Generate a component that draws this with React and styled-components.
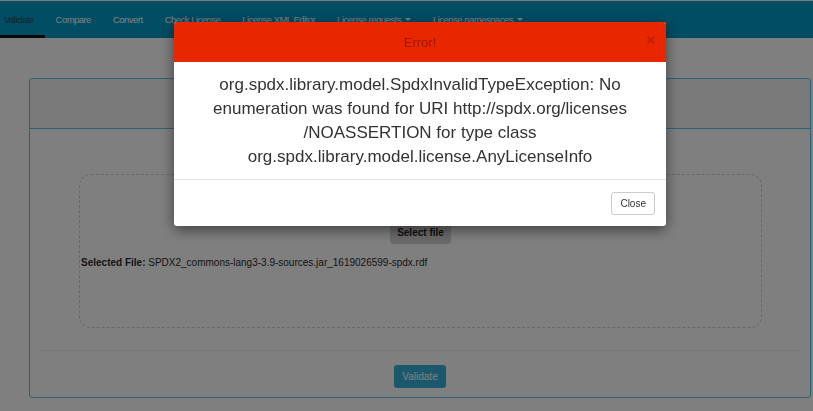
import React from "react";
import styled, { createGlobalStyle } from "styled-components";

const Global = createGlobalStyle`
  html, body { margin: 0; padding: 0; background: #fff; overflow: hidden; }
  body { font-family: "Liberation Sans", Arial, sans-serif; color: #333; }
  #root { width: 840px; }
`;

const Navbar = styled.nav`
  height: 37px;
  border-top: 1px solid #f2f6f8;
  background: #029ac6;
  display: flex;
  align-items: stretch;
`;

const NavList = styled.ul`
  list-style: none;
  margin: 0 0 0 -7px;
  padding: 0;
  display: flex;
`;

const NavItem = styled.li`
  display: flex;
  align-items: center;
  padding: 0 11px;
  font-family: "Liberation Sans", Arial, sans-serif;
  font-size: 9.4px;
  letter-spacing: -0.45px;
  color: ${(p) => (p.$active ? "#2a4a5a" : "#ffffff")};
  box-shadow: ${(p) => (p.$active ? "inset 0 -3px 0 #111" : "none")};
  white-space: nowrap;
`;

const Caret = styled.span`
  display: inline-block;
  width: 0;
  height: 0;
  margin-left: 4px;
  border-left: 3px solid transparent;
  border-right: 3px solid transparent;
  border-top: 3px solid currentColor;
  vertical-align: middle;
`;

const Container = styled.main`
  width: 782px;
  margin: 40px auto 0;
`;

const Panel = styled.section`
  border: 1px solid #58c6e8;
  border-radius: 3px;
  background: #fff;
`;

const PanelHeading = styled.header`
  height: 49px;
  background: #f5f5f5;
  border-bottom: 1px solid #58c6e8;
  border-radius: 3px 3px 0 0;
`;

const PanelBody = styled.div`
  padding: 45px 48px 22px 49px;
`;

const DropZone = styled.div`
  border: 1px dashed #d0d0d0;
  border-radius: 12px;
  display: flex;
  flex-direction: column;
  align-items: center;
  padding-top: 45px;
  box-sizing: border-box;
  height: 154px;
`;

const SelectButton = styled.button`
  height: 24px;
  padding: 0 7px;
  border: none;
  border-radius: 3px;
  background: #d6d6d6;
  color: #222;
  font-family: "Liberation Sans", Arial, sans-serif;
  font-size: 10px;
  font-weight: bold;
`;

const SelectedLine = styled.p`
  align-self: stretch;
  margin: 12px 0 0;
  padding-left: 1px;
  font-size: 10px;
  line-height: 14px;
  color: #2a2a2a;
  b { font-weight: bold; }
`;

const PanelFooter = styled.footer`
  margin: 0 9px;
  border-top: 1px solid #eee;
  padding: 14px 0 9px;
  display: flex;
  justify-content: center;
`;

const PrimaryButton = styled.button`
  height: 23px;
  padding: 0 8px;
  border: none;
  border-radius: 3px;
  background: #36b0dc;
  color: #fff;
  font-family: "Liberation Sans", Arial, sans-serif;
  font-size: 10px;
`;

const Backdrop = styled.div`
  position: fixed;
  inset: 0;
  background: rgba(0, 0, 0, 0.5);
`;

const ModalLayer = styled.div`
  position: fixed;
  top: 0;
  left: 0;
  width: 840px;
  height: 100%;
`;

const Dialog = styled.div`
  width: 492px;
  margin: 22px auto 0;
  background: #fff;
  border-radius: 3px;
  overflow: hidden;
  box-shadow: 0 4px 14px rgba(0, 0, 0, 0.5);
`;

const DialogHeader = styled.div`
  position: relative;
  height: 40px;
  background: #e82600;
  display: flex;
  align-items: center;
  justify-content: center;
`;

const DialogTitle = styled.h4`
  margin: 0;
  font-size: 13px;
  font-weight: normal;
  color: #9a1800;
`;

const CloseX = styled.button`
  position: absolute;
  right: 11px;
  top: 10px;
  border: none;
  background: none;
  padding: 0;
  font-family: "Liberation Sans", Arial, sans-serif;
  font-size: 15px;
  font-weight: bold;
  line-height: 15px;
  color: rgba(0, 0, 0, 0.22);
`;

const DialogBody = styled.div`
  padding: 11px 20px 10px;
  text-align: center;
  font-size: 17px;
  line-height: 24px;
  color: #333;
`;

const DialogFooter = styled.div`
  border-top: 1px solid #e5e5e5;
  padding: 12px 11px 11px;
  display: flex;
  justify-content: flex-end;
`;

const DefaultButton = styled.button`
  height: 23px;
  padding: 0 8px;
  background: #fff;
  border: 1px solid #ccc;
  border-radius: 3px;
  font-family: "Liberation Sans", Arial, sans-serif;
  font-size: 10px;
  color: #333;
`;

const navItems = [
  { label: "Validate", active: true },
  { label: "Compare" },
  { label: "Convert" },
  { label: "Check License" },
  { label: "License XML Editor" },
  { label: "License requests", caret: true },
  { label: "License namespaces", caret: true },
];

export default function App() {
  return (
    <>
      <Global />
      <Navbar>
        <NavList>
          {navItems.map((n) => (
            <NavItem key={n.label} $active={n.active}>
              {n.label}
              {n.caret && <Caret />}
            </NavItem>
          ))}
        </NavList>
      </Navbar>
      <Container>
        <Panel>
          <PanelHeading />
          <PanelBody>
            <DropZone>
              <SelectButton>Select file</SelectButton>
              <SelectedLine>
                <b>Selected File:</b> SPDX2_commons-lang3-3.9-sources.jar_1619026599-spdx.rdf
              </SelectedLine>
            </DropZone>
          </PanelBody>
          <PanelFooter>
            <PrimaryButton>Validate</PrimaryButton>
          </PanelFooter>
        </Panel>
      </Container>
      <Backdrop />
      <ModalLayer>
        <Dialog>
          <DialogHeader>
            <DialogTitle>Error!</DialogTitle>
            <CloseX>×</CloseX>
          </DialogHeader>
          <DialogBody>
            org.spdx.library.model.SpdxInvalidTypeException: No enumeration was found for URI
            http://spdx.org/licenses
            <br />
            /NOASSERTION for type class org.spdx.library.model.license.AnyLicenseInfo
          </DialogBody>
          <DialogFooter>
            <DefaultButton>Close</DefaultButton>
          </DialogFooter>
        </Dialog>
      </ModalLayer>
    </>
  );
}
